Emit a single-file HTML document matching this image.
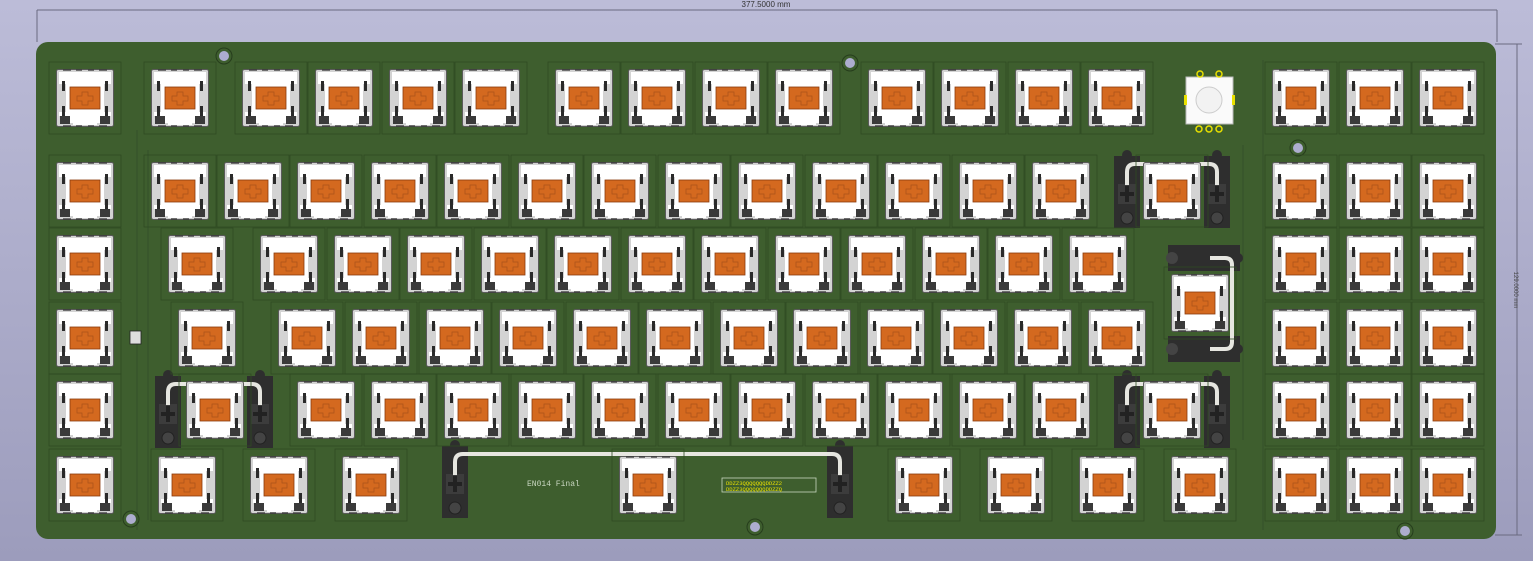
<!DOCTYPE html>
<html><head><meta charset="utf-8"><style>
html,body{margin:0;padding:0;width:1533px;height:561px;overflow:hidden;background:#b7b7d3}
svg{display:block}
</style></head><body>
<svg width="1533" height="561" viewBox="0 0 1533 561" xmlns="http://www.w3.org/2000/svg" font-family="Liberation Sans, sans-serif">
<defs>
<linearGradient id="bg" x1="0" y1="0" x2="0" y2="1"><stop offset="0" stop-color="#bcbcd8"/><stop offset="1" stop-color="#9c9cbc"/></linearGradient>
<g id="sw">
<rect x="-7" y="-7" width="72" height="72" fill="none" stroke="#2f4a22" stroke-width="0.8"/>
<rect x="0.5" y="0.5" width="57" height="57" rx="2" fill="#d3d3d3" stroke="#5a5a5a" stroke-width="1"/>
<rect x="3" y="3" width="52" height="12" fill="#fff"/>
<rect x="10" y="3" width="38" height="51" fill="#fff"/>
<rect x="3" y="43" width="52" height="4" fill="#fff"/>
<rect x="14" y="18" width="30" height="22" fill="#d4691f" stroke="#8a3a0c" stroke-width="0.8"/>
<path d="M26 23h6v4h5v5h-5v4h-6v-4h-5v-5h5z" fill="none" stroke="#a9521a" stroke-width="0.7"/>
<rect x="4" y="47" width="10" height="8" fill="#3a3a3a"/>
<rect x="44" y="47" width="10" height="8" fill="#3a3a3a"/>
<rect x="17" y="47" width="24" height="9" fill="#fff"/>
<rect x="6" y="12" width="3" height="10" fill="#2a2a2a"/>
<rect x="49" y="12" width="3" height="10" fill="#2a2a2a"/>
<rect x="6" y="37" width="3" height="10" fill="#2a2a2a"/>
<rect x="49" y="37" width="3" height="10" fill="#2a2a2a"/>
<path d="M7 1h8M20 1h6M32 1h6M43 1h8M7 57h8M20 57h6M32 57h6M43 57h8" stroke="#333" stroke-width="1.2"/>
</g>
<g id="stab">
<rect x="0" y="0" width="26" height="72" fill="#2e2e2e"/>
<rect x="4" y="28" width="18" height="20" fill="#3c3c3c"/>
<path d="M13 30v16M6 38h14" stroke="#222" stroke-width="4"/>
<circle cx="13" cy="62" r="6" fill="#444" stroke="#222"/>
<circle cx="13" cy="-1" r="5" fill="#2e2e2e"/>
</g>
<g id="hole"><circle r="8" fill="none" stroke="#263d1c" stroke-width="1"/><circle r="5" fill="#adadcf"/></g>
</defs>
<rect width="1533" height="561" fill="url(#bg)"/>
<path d="M37 10H1497M37 10V42M1497 10V42" stroke="#6a6a80" stroke-width="1" fill="none"/>
<text x="766" y="7" font-size="8" fill="#333" text-anchor="middle">377.5000 mm</text>
<path d="M1517 44V535M1495 44H1522M1495 535H1522" stroke="#6a6a80" stroke-width="1" fill="none"/>
<text transform="translate(1514,290) rotate(90)" font-size="6" fill="#444" text-anchor="middle">129.0000 mm</text>
<rect x="36" y="42" width="1460" height="497" rx="12" fill="#3e5e2e"/>
<path d="M137 130V530M148 150V520M1243 145V440M1263 60V530" stroke="#34502a" stroke-width="1"/>
<use href="#hole" x="224" y="56"/><use href="#hole" x="850" y="63"/><use href="#hole" x="1298" y="148"/>
<use href="#hole" x="131" y="519"/><use href="#hole" x="755" y="527"/><use href="#hole" x="1405" y="531"/>
<use href="#stab" x="1114" y="156"/><use href="#stab" x="1204" y="156"/>
<path d="M1127 185V172q0-8 8-8H1209q8 0 8 8V185" stroke="#e6e6e0" stroke-width="4" fill="none"/>
<use href="#stab" x="155" y="376"/><use href="#stab" x="247" y="376"/>
<path d="M168 405V392q0-8 8-8H252q8 0 8 8V405" stroke="#e6e6e0" stroke-width="4" fill="none"/>
<use href="#stab" x="1114" y="376"/><use href="#stab" x="1204" y="376"/>
<path d="M1127 405V392q0-8 8-8H1209q8 0 8 8V405" stroke="#e6e6e0" stroke-width="4" fill="none"/>
<use href="#stab" x="442" y="446"/><use href="#stab" x="827" y="446"/>
<path d="M455 475V462q0-8 8-8H832q8 0 8 8V475" stroke="#e6e6e0" stroke-width="4" fill="none"/>
<rect x="1168" y="245" width="72" height="26" fill="#2e2e2e"/>
<rect x="1168" y="336" width="72" height="26" fill="#2e2e2e"/>
<circle cx="1172" cy="258" r="6" fill="#444"/><circle cx="1172" cy="349" r="6" fill="#444"/>
<circle cx="1238" cy="258" r="5" fill="#2e2e2e"/><circle cx="1238" cy="349" r="5" fill="#2e2e2e"/>
<path d="M1210 258H1225q7 0 7 7V342q0 7-7 7H1210" stroke="#e6e6e0" stroke-width="4" fill="none"/>
<g>
<rect x="1186" y="77" width="47" height="47" fill="#fafafa" stroke="#bbb"/>
<circle cx="1209" cy="100" r="13" fill="#f2f2f2" stroke="#ccc"/>
<circle cx="1200" cy="74" r="3" fill="none" stroke="#e8e000" stroke-width="1.5"/><circle cx="1219" cy="74" r="3" fill="none" stroke="#e8e000" stroke-width="1.5"/>
<circle cx="1199" cy="129" r="3" fill="none" stroke="#e8e000" stroke-width="1.5"/><circle cx="1209" cy="129" r="3" fill="none" stroke="#e8e000" stroke-width="1.5"/><circle cx="1219" cy="129" r="3" fill="none" stroke="#e8e000" stroke-width="1.5"/>
<rect x="1184" y="95" width="3" height="10" fill="#e8e000"/><rect x="1232" y="95" width="3" height="10" fill="#e8e000"/>
</g>
<g>
<use href="#sw" x="56" y="69"/><use href="#sw" x="151" y="69"/><use href="#sw" x="242" y="69"/><use href="#sw" x="315" y="69"/><use href="#sw" x="389" y="69"/><use href="#sw" x="462" y="69"/>
<use href="#sw" x="555" y="69"/><use href="#sw" x="628" y="69"/><use href="#sw" x="702" y="69"/><use href="#sw" x="775" y="69"/>
<use href="#sw" x="868" y="69"/><use href="#sw" x="941" y="69"/><use href="#sw" x="1015" y="69"/><use href="#sw" x="1088" y="69"/>
<use href="#sw" x="1272" y="69"/><use href="#sw" x="1346" y="69"/><use href="#sw" x="1419" y="69"/>
</g>
<g>
<use href="#sw" x="56" y="162"/><use href="#sw" x="151" y="162"/><use href="#sw" x="224" y="162"/><use href="#sw" x="297" y="162"/><use href="#sw" x="371" y="162"/><use href="#sw" x="444" y="162"/><use href="#sw" x="518" y="162"/><use href="#sw" x="591" y="162"/><use href="#sw" x="665" y="162"/><use href="#sw" x="738" y="162"/><use href="#sw" x="812" y="162"/><use href="#sw" x="885" y="162"/><use href="#sw" x="959" y="162"/><use href="#sw" x="1032" y="162"/><use href="#sw" x="1143" y="162"/>
<use href="#sw" x="1272" y="162"/><use href="#sw" x="1346" y="162"/><use href="#sw" x="1419" y="162"/>
</g>
<g>
<use href="#sw" x="56" y="235"/><use href="#sw" x="168" y="235"/><use href="#sw" x="260" y="235"/><use href="#sw" x="334" y="235"/><use href="#sw" x="407" y="235"/><use href="#sw" x="481" y="235"/><use href="#sw" x="554" y="235"/><use href="#sw" x="628" y="235"/><use href="#sw" x="701" y="235"/><use href="#sw" x="775" y="235"/><use href="#sw" x="848" y="235"/><use href="#sw" x="922" y="235"/><use href="#sw" x="995" y="235"/><use href="#sw" x="1069" y="235"/><use href="#sw" x="1171" y="274"/>
<use href="#sw" x="1272" y="235"/><use href="#sw" x="1346" y="235"/><use href="#sw" x="1419" y="235"/>
</g>
<g>
<use href="#sw" x="56" y="309"/><use href="#sw" x="178" y="309"/><use href="#sw" x="278" y="309"/><use href="#sw" x="352" y="309"/><use href="#sw" x="426" y="309"/><use href="#sw" x="499" y="309"/><use href="#sw" x="573" y="309"/><use href="#sw" x="646" y="309"/><use href="#sw" x="720" y="309"/><use href="#sw" x="793" y="309"/><use href="#sw" x="867" y="309"/><use href="#sw" x="940" y="309"/><use href="#sw" x="1014" y="309"/><use href="#sw" x="1088" y="309"/>
<use href="#sw" x="1272" y="309"/><use href="#sw" x="1346" y="309"/><use href="#sw" x="1419" y="309"/>
</g>
<g>
<use href="#sw" x="56" y="381"/><use href="#sw" x="186" y="381"/><use href="#sw" x="297" y="381"/><use href="#sw" x="371" y="381"/><use href="#sw" x="444" y="381"/><use href="#sw" x="518" y="381"/><use href="#sw" x="591" y="381"/><use href="#sw" x="665" y="381"/><use href="#sw" x="738" y="381"/><use href="#sw" x="812" y="381"/><use href="#sw" x="885" y="381"/><use href="#sw" x="959" y="381"/><use href="#sw" x="1032" y="381"/><use href="#sw" x="1143" y="381"/>
<use href="#sw" x="1272" y="381"/><use href="#sw" x="1346" y="381"/><use href="#sw" x="1419" y="381"/>
</g>
<g>
<use href="#sw" x="56" y="456"/><use href="#sw" x="158" y="456"/><use href="#sw" x="250" y="456"/><use href="#sw" x="342" y="456"/><use href="#sw" x="619" y="456"/><use href="#sw" x="895" y="456"/><use href="#sw" x="987" y="456"/><use href="#sw" x="1079" y="456"/><use href="#sw" x="1171" y="456"/>
<use href="#sw" x="1272" y="456"/><use href="#sw" x="1346" y="456"/><use href="#sw" x="1419" y="456"/>
</g>
<rect x="130" y="331" width="11" height="13" fill="#ddd" stroke="#222" stroke-width="0.8"/>
<text x="527" y="486" font-size="8" fill="#c8d6c0" font-family="Liberation Mono, monospace">EN014 Final</text>
<rect x="722" y="478" width="94" height="14" fill="none" stroke="#c8d6c0" stroke-width="0.8"/>
<text x="726" y="485" font-size="5.5" fill="#e8e000" font-family="Liberation Mono, monospace">DDZZ3QQQQQQQDDZZ2</text>
<text x="726" y="491" font-size="5.5" fill="#e8e000" font-family="Liberation Mono, monospace">DDZZ3QQQQQQQDDZZQ</text>
</svg>
</body></html>
